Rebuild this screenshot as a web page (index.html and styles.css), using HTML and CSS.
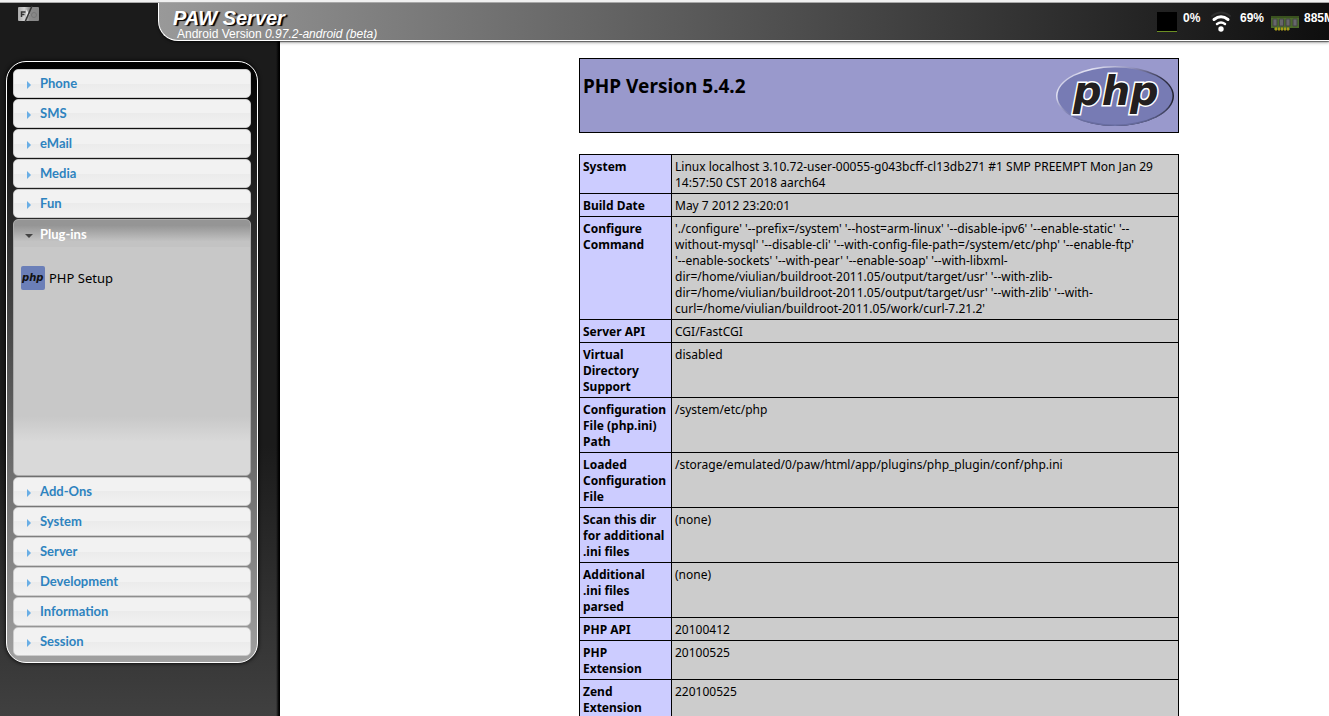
FILE: index.html
```html
<!DOCTYPE html>
<html lang="en">
<head>
<meta charset="utf-8">
<title>PAW Server</title>
<link rel="stylesheet" href="styles.css">
</head>
<body>
<div class="page">
  <header class="top">
    <a class="flash" href="#" aria-label="Toggle flash">
      <svg width="24" height="18" viewBox="0 0 24 18">
        <defs><linearGradient id="fl" x2="1"><stop offset="0" stop-color="#a8a8a8"/><stop offset=".3" stop-color="#d0d0d0"/><stop offset=".55" stop-color="#8a8a8a"/><stop offset="1" stop-color="#858585"/></linearGradient></defs>
        <rect x="1" y="2" width="21" height="14" rx="1" fill="url(#fl)"/>
        <path d="M4.500 12V7h4M4.500 9.500h3" stroke="#333" stroke-width="1.500" fill="none"/>
        <path d="M10 12V7l2 3" stroke="#eee" stroke-width="1.500" fill="none"/>
        <circle cx="17" cy="10" r="2.500" stroke="#777" fill="none"/>
        <path d="M15 1L8 17" stroke="#333" stroke-width="1.500"/>
      </svg>
    </a>
    <div class="bar">
      <div class="brand">
        <h1 class="title">PAW Server</h1>
        <p class="version">Android Version <em>0.97.2-android (beta)</em></p>
      </div>
      <div class="status">
        <span class="cpu"></span><span class="cpu-value">0%</span>
        <svg class="wifi" width="20" height="22" viewBox="0 0 20 22" fill="none" stroke="#fff" stroke-linecap="round">
          <path d="M1 5Q10-2 19 5" stroke="#2e2e2e" stroke-width="2"/>
          <path d="M3 8.500Q10 3 17 8.500" stroke-width="3"/>
          <path d="M6 13Q10 10 14 13" stroke-width="2.500"/>
          <circle cx="10" cy="18" r="2.700" fill="#fff" stroke="none"/>
        </svg>
        <span class="wifi-value">69%</span>
        <svg class="ram" width="28" height="16" viewBox="0 0 28 16">
          <path d="M0 1h28v12h-9v2H3v-2H0z" fill="#4a6b2a"/>
          <path d="M0 1h28v2H0z" fill="#3a521f"/>
          <path d="M2 4h4v7H2zM8.500 4h4v7h-4zM15 4h4v7h-4zM22 4h4v7h-4z" fill="#66666c" stroke="#444"/>
          <path d="M4 14h15" stroke="#a99a18" stroke-width="3" stroke-dasharray="2 1"/>
        </svg>
        <span class="ram-value">885M</span>
      </div>
    </div>
  </header>
  <div class="body">
    <aside class="side">
      <nav class="menu">
        <button class="item">Phone</button>
        <button class="item">SMS</button>
        <button class="item">eMail</button>
        <button class="item">Media</button>
        <button class="item">Fun</button>
        <section class="open">
          <button class="item active" aria-expanded="true">Plug-ins</button>
          <a class="plugin" href="#">
            <svg width="24" height="24" viewBox="0 0 24 24"><rect width="24" height="24" rx="2" fill="#6b7fb8"/><text class="mini-php" x="1" y="15">php</text></svg>
            PHP Setup
          </a>
        </section>
        <button class="item">Add-Ons</button>
        <button class="item">System</button>
        <button class="item">Server</button>
        <button class="item">Development</button>
        <button class="item">Information</button>
        <button class="item">Session</button>
      </nav>
    </aside>
    <main class="main">
      <div class="info">
        <div class="banner">
          <h2 class="php-version">PHP Version 5.4.2</h2>
          <svg width="120" height="67" viewBox="0 0 120 67" role="img" aria-label="PHP logo">
            <defs>
              <linearGradient id="rim" x2="1" y2=".7"><stop offset="0" stop-color="#8c8cba"/><stop offset=".22" stop-color="#e4e4f4"/><stop offset=".45" stop-color="#9090bc"/><stop offset=".7" stop-color="#33334a"/><stop offset="1" stop-color="#18181f"/></linearGradient>
              <linearGradient id="low" x2="0" y2="1"><stop offset=".55" stop-color="#6c71a8" stop-opacity="0"/><stop offset="1" stop-color="#6c71a8"/></linearGradient>
            </defs>
            <ellipse cx="60" cy="34" rx="59" ry="30" fill="url(#rim)"/>
            <ellipse cx="60" cy="34" rx="59" ry="30" fill="url(#low)"/>
            <ellipse cx="60" cy="34" rx="57.500" ry="28.500" fill="#777bb4"/>
            <text class="logo-php" x="18" y="43">php</text>
          </svg>
        </div>
        <table class="facts">
          <tr><th scope="row">System</th><td>Linux localhost 3.10.72-user-00055-g043bcff-cl13db271 #1 SMP PREEMPT Mon Jan 29<br>14:57:50 CST 2018 aarch64</td></tr>
          <tr><th scope="row">Build Date</th><td>May 7 2012 23:20:01</td></tr>
          <tr><th scope="row">Configure<br>Command</th><td>'./configure' '--prefix=/system' '--host=arm-linux' '--disable-ipv6' '--enable-static' '--<br>without-mysql' '--disable-cli' '--with-config-file-path=/system/etc/php' '--enable-ftp'<br>'--enable-sockets' '--with-pear' '--enable-soap' '--with-libxml-<br>dir=/home/viulian/buildroot-2011.05/output/target/usr' '--with-zlib-<br>dir=/home/viulian/buildroot-2011.05/output/target/usr' '--with-zlib' '--with-<br>curl=/home/viulian/buildroot-2011.05/work/curl-7.21.2'</td></tr>
          <tr><th scope="row">Server API</th><td>CGI/FastCGI</td></tr>
          <tr><th scope="row">Virtual<br>Directory<br>Support</th><td>disabled</td></tr>
          <tr><th scope="row">Configuration<br>File (php.ini)<br>Path</th><td>/system/etc/php</td></tr>
          <tr><th scope="row">Loaded<br>Configuration<br>File</th><td>/storage/emulated/0/paw/html/app/plugins/php_plugin/conf/php.ini</td></tr>
          <tr><th scope="row">Scan this dir<br>for additional<br>.ini files</th><td>(none)</td></tr>
          <tr><th scope="row">Additional<br>.ini files<br>parsed</th><td>(none)</td></tr>
          <tr><th scope="row">PHP API</th><td>20100412</td></tr>
          <tr><th scope="row">PHP<br>Extension</th><td>20100525</td></tr>
          <tr><th scope="row">Zend<br>Extension</th><td>220100525</td></tr>
        </table>
      </div>
    </main>
  </div>
</div>
</body>
</html>
```
FILE: styles.css
```css
* { box-sizing: border-box; }
body { margin: 0; background: #fff; font-family: "Noto Sans", "Open Sans", sans-serif; font-size: 12px; }
.page { display: flex; flex-direction: column; height: 100vh; overflow: hidden; border-top: 2px solid #f0f0f0; }
.top { display: flex; flex: none; border-top: 1px solid #aaa; background: linear-gradient(90deg, #1b1b1b 278px, #000 280px, #fff 280px); }
.flash { flex: none; width: 158px; padding: 2px 17px; }
.flash svg { display: block; }
.bar { display: flex; flex: 1; min-width: 0; height: 38px; border-left: 1px solid #fff; border-bottom: 1px solid #fff; border-bottom-left-radius: 20px; background: linear-gradient(90deg, #999, #0e0e0e); box-shadow: 0 1px 1px rgba(0, 0, 0, .5), 0 2px 3px rgba(0, 0, 0, .3); z-index: 1; font-family: "Liberation Sans", Arial, sans-serif; color: #fff; }
.brand { padding: 4px 0 0 14px; white-space: nowrap; }
.title { margin: 0; font-size: 20px; line-height: 22px; font-style: italic; text-shadow: 2px 1px 1px #000; }
.version { margin: 0 0 0 4px; font-size: 12px; line-height: 10px; }
.status { display: flex; flex: none; align-items: flex-start; margin-left: auto; font-size: 12px; font-weight: bold; line-height: 14px; padding-top: 8px; }
.cpu { width: 20px; height: 20px; margin: 1px 6px 0 0; background: #000; border-bottom: 1px solid #6b8e23; }
.cpu-value { width: 28px; }
.wifi { margin-right: 9px; }
.wifi-value { width: 31px; }
.ram { margin: 4px 5px 0 0; }
.ram-value { width: 25px; }
.body { display: flex; flex: 1; min-height: 0; }
.side { flex: none; width: 280px; padding: 20px 22px 0 6px; background: linear-gradient(90deg, transparent 276px, #000 279px), linear-gradient(#1b1b1b 60%, #404040); }
.menu { display: flex; flex-direction: column; gap: 1px; padding: 7px 6px 6px; border: 1px solid #fff; border-radius: 20px; background: linear-gradient(#000, #a0a0a0); box-shadow: 0 0 4px #000; }
.item { display: flex; align-items: center; gap: 9px; width: 100%; height: 29px; padding: 0 0 2px 13px; border: 1px solid #ccc; border-radius: 5px; background: linear-gradient(#f2f2f2 50%, #ebebeb 50%, #f2f2f2); color: #2e83bf; font: bold 13px Lato, "Open Sans", sans-serif; text-align: left; }
.item::before { content: ""; margin-top: 4px; border: 4px solid transparent; border-left-color: #69aee5; border-right: 0; }
.open { height: 257px; border: 1px solid #aaa; border-radius: 5px; background: linear-gradient(#c8c8c8 77%, #d9d9d9 87%); }
.active { height: 27px; border: 0; border-radius: 4px 4px 0 0; padding: 0 0 0 11px; gap: 7px; background: linear-gradient(#959595 20%, #c3c3c3 80%); color: #fff; }
.active::before { border: 4px solid transparent; border-top-color: #444; border-bottom: 0; }
.plugin { display: flex; align-items: center; gap: 4px; margin: 19px 0 0 7px; color: #000; font: 13px "Noto Sans", sans-serif; text-decoration: none; }
.mini-php { font: italic bold 10px "DejaVu Sans", sans-serif; fill: #111; }
.main { flex: 1; display: flex; justify-content: center; align-items: flex-start; padding: 17px 0 0 149px; }
.info { flex: 1; max-width: 600px; }
.banner { display: flex; justify-content: space-between; height: 75px; padding: 3px; border: 1px solid #000; background: #99c; }
.php-version { margin: 12px 0 0; font-size: 19px; line-height: 24px; }
.facts { width: 100%; margin-top: 21px; border-collapse: collapse; line-height: 16px; }
.facts th, .facts td { padding: 4px 3px 2px; border: 1px solid #000; vertical-align: top; text-align: left; white-space: nowrap; }
.facts th { width: 92px; background: #ccf; }
.facts td { background: #ccc; }
.logo-php { font: italic bold 40px "DejaVu Sans", sans-serif; fill: #231f20; stroke: #fff; stroke-width: 3px; paint-order: stroke; }
```
